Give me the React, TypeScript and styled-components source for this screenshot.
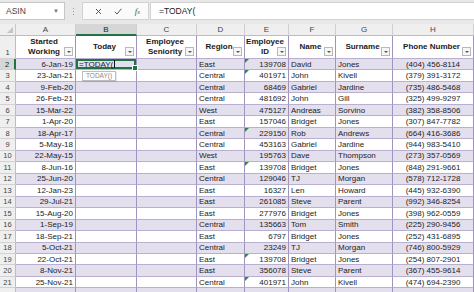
import React from "react";
import styled, { createGlobalStyle, css } from "styled-components";

const Global = createGlobalStyle`
  html, body { margin: 0; padding: 0; background: #fff; }
  body {
    width: 474px; height: 292px; overflow: hidden;
    font-family: "Liberation Sans Narrow", "Liberation Sans", Arial, sans-serif;
  }
`;

const COLS = "16px 60px 61px 60px 48px 44px 47px 57px 81px";
const V_LINE = "#a093bd";
const H_LINE = "#b9afd0";
const BAND = "#e4dfec";
const GREEN = "#217346";

type Align = "left" | "right" | "center";

interface Row {
  date: string;
  region: string;
  id: string;
  name: string;
  surname: string;
  phone: string;
  flag?: boolean;
}

const rows: Row[] = [
  { date: "6-Jan-19", region: "East", id: "139708", name: "David", surname: "Jones", phone: "(404) 456-8114", flag: true },
  { date: "23-Jan-21", region: "Central", id: "401971", name: "John", surname: "Kivell", phone: "(379) 391-3172", flag: true },
  { date: "9-Feb-20", region: "Central", id: "68469", name: "Gabriel", surname: "Jardine", phone: "(735) 486-5468" },
  { date: "26-Feb-21", region: "Central", id: "481692", name: "John", surname: "Gill", phone: "(325) 499-9297" },
  { date: "15-Mar-22", region: "West", id: "475127", name: "Andreas", surname: "Sorvino", phone: "(382) 358-8506" },
  { date: "1-Apr-20", region: "East", id: "157046", name: "Bridget", surname: "Jones", phone: "(307) 847-7782" },
  { date: "18-Apr-17", region: "Central", id: "229150", name: "Rob", surname: "Andrews", phone: "(664) 416-3686", flag: true },
  { date: "5-May-18", region: "Central", id: "453163", name: "Gabriel", surname: "Jardine", phone: "(944) 983-5410" },
  { date: "22-May-15", region: "West", id: "195763", name: "Dave", surname: "Thompson", phone: "(273) 357-0569" },
  { date: "8-Jun-16", region: "East", id: "139708", name: "Bridget", surname: "Jones", phone: "(848) 291-9661", flag: true },
  { date: "25-Jun-20", region: "Central", id: "129046", name: "TJ", surname: "Morgan", phone: "(578) 712-1728" },
  { date: "12-Jan-23", region: "East", id: "16327", name: "Len", surname: "Howard", phone: "(445) 932-6390" },
  { date: "29-Jul-21", region: "East", id: "261085", name: "Steve", surname: "Parent", phone: "(992) 346-8254" },
  { date: "15-Aug-20", region: "East", id: "277976", name: "Bridget", surname: "Jones", phone: "(398) 962-0559" },
  { date: "1-Sep-19", region: "Central", id: "135663", name: "Tom", surname: "Smith", phone: "(225) 290-9456" },
  { date: "18-Sep-21", region: "East", id: "6797", name: "Bridget", surname: "Jones", phone: "(252) 431-6895" },
  { date: "5-Oct-21", region: "Central", id: "23249", name: "TJ", surname: "Morgan", phone: "(746) 800-5929" },
  { date: "22-Oct-21", region: "East", id: "139708", name: "Bridget", surname: "Jones", phone: "(254) 807-2901", flag: true },
  { date: "8-Nov-21", region: "East", id: "356078", name: "Steve", surname: "Parent", phone: "(367) 455-9614" },
  { date: "25-Nov-21", region: "Central", id: "401971", name: "John", surname: "Kivell", phone: "(474) 694-2390", flag: true },
];

const headers: string[][] = [
  ["Started", "Working"],
  ["Today"],
  ["Employee", "Seniority"],
  ["Region"],
  ["Employee", "ID"],
  ["Name"],
  ["Surname"],
  ["Phone Number"],
];

/* ---------- formula bar ---------- */

const TopBar = styled.div`
  display: flex;
  height: 24px;
  box-sizing: border-box;
  padding: 2px 0 4px 0;
  background: #e8e8e8;
`;

const NameBox = styled.div`
  width: 65px;
  box-sizing: border-box;
  background: #fff;
  border: 1px solid #c6c6c6;
  border-left: none;
  display: flex;
  align-items: center;
  justify-content: space-between;
  padding: 0 5px 0 6px;
  font-size: 8.5px;
  color: #444;
`;

const Caret = styled.span`
  font-size: 6px;
  color: #777;
`;

const Grip = styled.div`
  width: 17px;
  display: flex;
  flex-direction: column;
  align-items: center;
  justify-content: center;
  gap: 2px;
`;

const Dot = styled.span`
  width: 1px;
  height: 1px;
  background: #999;
`;

const FxBox = styled.div`
  width: 67px;
  box-sizing: border-box;
  background: #fafafa;
  border: 1px solid #d2d2d2;
  display: flex;
  align-items: center;
  justify-content: space-around;
  padding: 0 2px 0 6px;
  color: #555;
`;

const Fx = styled.span`
  font-family: "Liberation Serif", serif;
  font-style: italic;
  font-size: 9px;
  color: #555;
`;

const FxSub = styled.span`
  font-size: 6px;
`;

const FormulaInput = styled.div`
  flex: 1;
  box-sizing: border-box;
  background: #fff;
  border: 1px solid #d2d2d2;
  border-right: none;
  margin-left: 1px;
  display: flex;
  align-items: center;
  padding-left: 8px;
  font-size: 8.5px;
  color: #222;
`;

/* ---------- sheet ---------- */

const Sheet = styled.div`
  display: grid;
  grid-template-columns: ${COLS};
  grid-template-rows: 12px 23px;
  grid-auto-rows: 11.47px;
  font-size: 8px;
  color: #1c1c1c;
`;

const Corner = styled.div`
  position: relative;
  background: #efefef;
  border-right: 1px solid #c9c9c9;
  border-bottom: 1px solid #bdbdbd;
  box-sizing: border-box;
`;

const CornerTri = styled.span`
  position: absolute;
  right: 2px;
  bottom: 2px;
  width: 0;
  height: 0;
  border-left: 6px solid transparent;
  border-bottom: 6px solid #c4c4c4;
`;

const ColHead = styled.div<{ $active?: boolean }>`
  box-sizing: border-box;
  display: flex;
  align-items: center;
  justify-content: center;
  background: ${(p) => (p.$active ? "#d6d6d6" : "#efefef")};
  border-right: 1px solid #cfcfcf;
  border-bottom: ${(p) => (p.$active ? `2px solid ${GREEN}` : "1px solid #bdbdbd")};
  color: ${(p) => (p.$active ? "#222" : "#444")};
  font-size: 8px;
`;

const RowHead = styled.div<{ $active?: boolean; $bottom?: boolean }>`
  box-sizing: border-box;
  display: flex;
  align-items: ${(p) => (p.$bottom ? "flex-end" : "center")};
  justify-content: center;
  padding-bottom: ${(p) => (p.$bottom ? "1px" : "0")};
  background: ${(p) => (p.$active ? "#d6d6d6" : "#efefef")};
  border-right: ${(p) => (p.$active ? `2px solid ${GREEN}` : "1px solid #bdbdbd")};
  border-bottom: 1px solid #d2d2d2;
  color: ${(p) => (p.$active ? "#222" : "#444")};
  font-size: 7.5px;
`;

const HeadCell = styled.div`
  position: relative;
  box-sizing: border-box;
  display: flex;
  flex-direction: column;
  align-items: center;
  justify-content: center;
  padding: 0 4px 0 1px;
  background: #fff;
  border-right: 1px solid ${V_LINE};
  border-bottom: 1px solid ${H_LINE};
  font-weight: bold;
  line-height: 10.5px;
  white-space: nowrap;
  color: #1a1a1a;
`;

const FilterBtn = styled.span`
  position: absolute;
  right: 2px;
  bottom: 2px;
  width: 9px;
  height: 9px;
  box-sizing: border-box;
  background: #f6f6f6;
  border: 1px solid #b8b8b8;
  display: flex;
  align-items: center;
  justify-content: center;
  &::after {
    content: "";
    width: 0;
    height: 0;
    border-left: 2px solid transparent;
    border-right: 2px solid transparent;
    border-top: 2px solid #555;
  }
`;

const Cell = styled.div<{ $align?: Align; $band?: boolean }>`
  position: relative;
  box-sizing: border-box;
  display: flex;
  align-items: center;
  justify-content: ${(p) =>
    p.$align === "right" ? "flex-end" : p.$align === "center" ? "center" : "flex-start"};
  padding: 0 2px;
  background: ${(p) => (p.$band ? BAND : "#fff")};
  border-right: 1px solid ${V_LINE};
  border-bottom: 1px solid ${H_LINE};
  white-space: nowrap;
  overflow: visible;
`;

const Flag = styled.span`
  position: absolute;
  left: 0;
  top: 0;
  width: 0;
  height: 0;
  border-top: 4px solid #2e8b47;
  border-right: 4px solid transparent;
`;

const ActiveCell = styled(Cell)`
  overflow: visible;
  z-index: 2;
  box-shadow: inset 0 0 0 2px ${GREEN};
  padding-left: 3px;
  ${css`
    &::after {
      content: "";
      position: absolute;
      right: -2px;
      bottom: -2px;
      width: 4px;
      height: 4px;
      background: ${GREEN};
      border: 1px solid #fff;
    }
  `}
`;

const CursorText = styled.span`
  &::after {
    content: "";
    display: inline-block;
    width: 1px;
    height: 8px;
    background: #111;
    vertical-align: -1px;
    margin-left: 1px;
  }
`;

const Tooltip = styled.span`
  position: absolute;
  left: 6px;
  top: 12px;
  height: 10px;
  box-sizing: border-box;
  padding: 0 3px;
  background: #fff;
  border: 1px solid #bdbdbd;
  color: #8a8a8a;
  font-size: 6.5px;
  line-height: 8px;
  box-shadow: 1px 1px 1px rgba(0, 0, 0, 0.08);
`;

const XIcon = () => (
  <svg width="7" height="7" viewBox="0 0 7 7">
    <path d="M1 1 L6 6 M6 1 L1 6" stroke="#555" strokeWidth="1" fill="none" />
  </svg>
);

const CheckIcon = () => (
  <svg width="8" height="7" viewBox="0 0 8 7">
    <path d="M0.8 3.8 L3 6 L7.3 0.8" stroke="#555" strokeWidth="1" fill="none" />
  </svg>
);

export default function App() {
  const letters = ["A", "B", "C", "D", "E", "F", "G", "H"];
  return (
    <>
      <Global />
      <TopBar>
        <NameBox>
          ASIN
          <Caret>▼</Caret>
        </NameBox>
        <Grip>
          <Dot />
          <Dot />
          <Dot />
        </Grip>
        <FxBox>
          <XIcon />
          <CheckIcon />
          <Fx>
            f<FxSub>x</FxSub>
          </Fx>
        </FxBox>
        <FormulaInput>=TODAY(</FormulaInput>
      </TopBar>
      <Sheet>
        <Corner>
          <CornerTri />
        </Corner>
        {letters.map((l) => (
          <ColHead key={l} $active={l === "B"}>
            {l}
          </ColHead>
        ))}

        <RowHead $bottom>1</RowHead>
        {headers.map((lines, i) => (
          <HeadCell key={i}>
            {lines.map((t) => (
              <span key={t}>{t}</span>
            ))}
            <FilterBtn />
          </HeadCell>
        ))}

        {rows.map((r, i) => {
          const band = i % 2 === 0;
          const n = i + 2;
          return (
            <React.Fragment key={n}>
              <RowHead $active={n === 2}>{n}</RowHead>
              <Cell $align="right" $band={band}>{r.date}</Cell>
              {n === 2 ? (
                <ActiveCell $band={band}>
                  <CursorText>=TODAY(</CursorText>
                  <Tooltip>TODAY()</Tooltip>
                </ActiveCell>
              ) : (
                <Cell $band={band} />
              )}
              <Cell $band={band} />
              <Cell $band={band}>{r.region}</Cell>
              <Cell $align="right" $band={band}>
                {r.flag && <Flag />}
                {r.id}
              </Cell>
              <Cell $band={band}>{r.name}</Cell>
              <Cell $band={band}>{r.surname}</Cell>
              <Cell $align="center" $band={band}>{r.phone}</Cell>
            </React.Fragment>
          );
        })}
        <RowHead />
        {letters.map((l) => (
          <Cell key={l} $band />
        ))}
      </Sheet>
    </>
  );
}
